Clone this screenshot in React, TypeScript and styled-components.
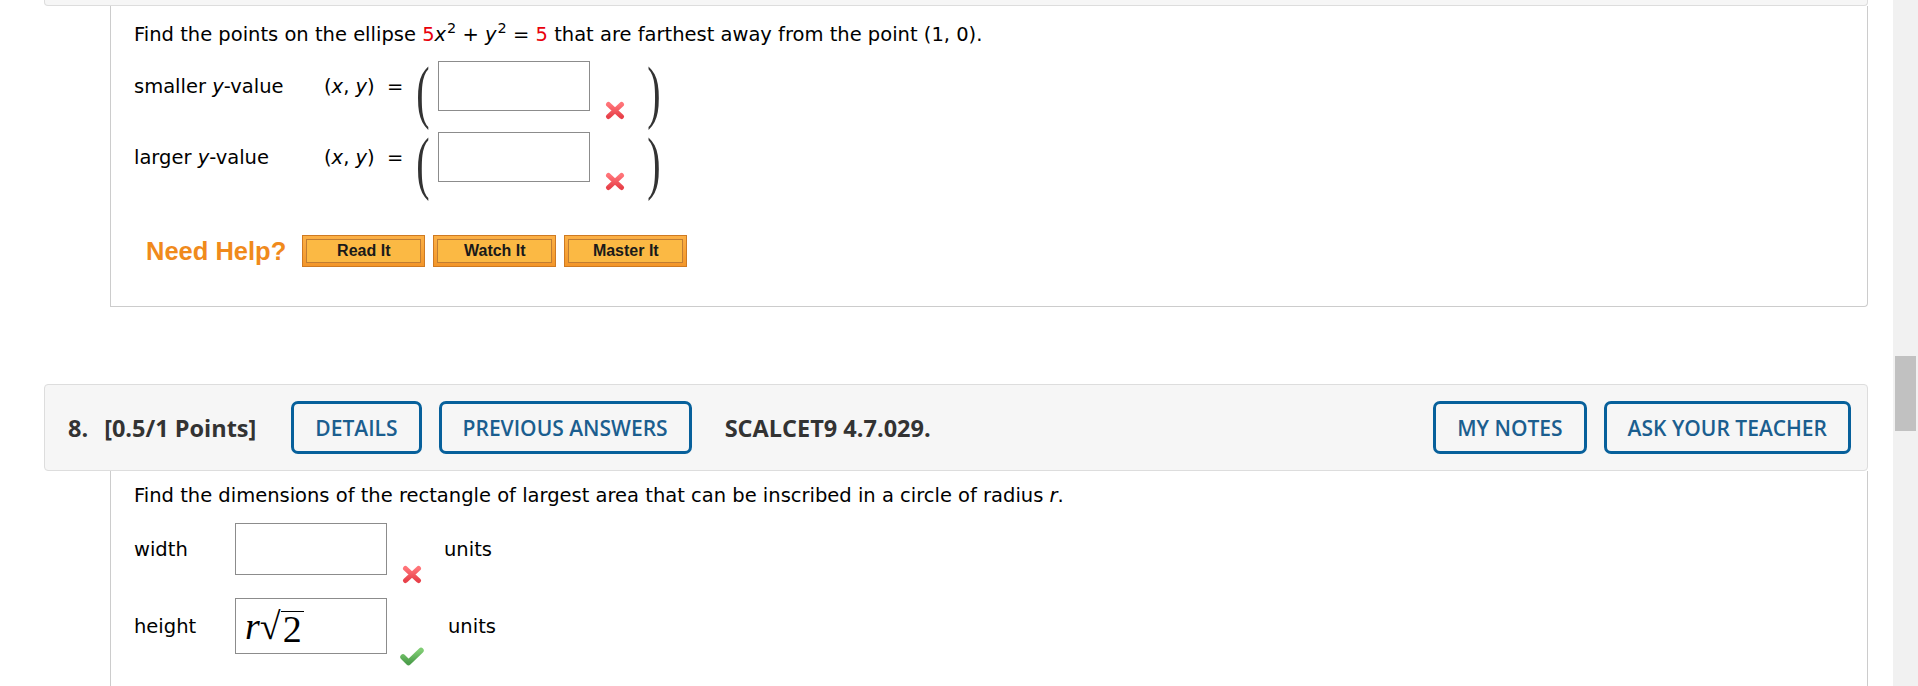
import React from 'react';
import styled, { createGlobalStyle } from 'styled-components';

const GlobalStyle = createGlobalStyle`
  html, body {
    margin: 0;
    padding: 0;
    background: #fff;
    overflow: hidden;
  }
  body {
    font-family: "DejaVu Sans", Verdana, sans-serif;
    font-size: 19.5px;
    color: #000;
  }
`;

const Page = styled.div`
  display: flex;
  width: 1918px;
  height: 686px;
  overflow: hidden;
`;

const Main = styled.main`
  flex: 1;
  min-width: 0;
  padding: 0 25px 0 44px;
`;

const Scrollbar = styled.div`
  width: 25px;
  background: #f1f1f1;
  display: flex;
  flex-direction: column;
  align-items: center;
`;

const Thumb = styled.div`
  margin-top: 356px;
  width: 21px;
  height: 75px;
  background: #c1c1c1;
`;

const HeaderTail = styled.div`
  height: 5px;
  background: #f6f6f6;
  border: 1px solid #ddd;
  border-top: none;
  border-radius: 0 0 4px 4px;
`;

const QuestionBody = styled.div<{ $open?: boolean }>`
  margin-left: 66px;
  border: 1px solid #ccc;
  border-top: none;
  border-bottom: ${(p) => (p.$open ? 'none' : '1px solid #ccc')};
  border-radius: ${(p) => (p.$open ? '0' : '0 0 4px 0')};
  padding: ${(p) => (p.$open ? '13px 0 60px 23px' : '17px 0 39px 23px')};
`;

const Prompt = styled.p<{ $gap: number }>`
  margin: 0 0 ${(p) => p.$gap}px;
  line-height: 24px;
`;

const Red = styled.span`
  color: #e8000b;
`;

const Sup = styled.sup`
  font-size: 0.74em;
  line-height: 0;
  vertical-align: 0.55em;
  margin-left: 1px;
`;

const AnswerRow = styled.div`
  display: flex;
  align-items: center;
  height: 50px;

  & + & {
    margin-top: 21px;
  }
`;

const RowLabel = styled.span<{ $w: number }>`
  width: ${(p) => p.$w}px;
  flex: none;
`;

const Expr = styled.span`
  width: 92px;
  flex: none;
  white-space: pre;
`;

const Paren = styled.span<{ $before: number; $after: number }>`
  align-self: flex-start;
  margin-top: -2px;
  margin-left: ${(p) => p.$before}px;
  margin-right: ${(p) => p.$after}px;
  height: 62px;
  width: 14px;
  display: flex;
  align-items: center;
  justify-content: center;
  font-family: "Liberation Serif", serif;
  font-size: 40px;
  color: #333;
  transform: scale(1, 1.75);
`;

const AnswerBox = styled.div<{ $h: number }>`
  width: 152px;
  height: ${(p) => p.$h}px;
  box-sizing: border-box;
  border: 1px solid #8c8c8c;
  background: #fff;
  flex: none;
  display: flex;
  align-items: center;
  padding-left: 9px;
`;

const Mark = styled.span<{ $top: number; $left: number }>`
  align-self: flex-start;
  margin-top: ${(p) => p.$top}px;
  margin-left: ${(p) => p.$left}px;
  display: flex;
  flex: none;
`;

const NeedHelpRow = styled.div`
  display: flex;
  align-items: center;
  gap: 8px;
  margin-top: 53px;
  padding-left: 12px;
`;

const NeedHelp = styled.span`
  font-family: "Liberation Sans", Arial, sans-serif;
  font-weight: bold;
  font-size: 25.5px;
  color: #f08a1c;
  margin-right: 8px;
`;

const HelpButton = styled.button`
  width: 123px;
  height: 32px;
  padding: 3px;
  box-sizing: border-box;
  border: 1px solid #cf7a22;
  background: linear-gradient(#fbb046, #f3962a);
  cursor: pointer;
  display: flex;
`;

const HelpFace = styled.span`
  flex: 1;
  display: flex;
  align-items: center;
  justify-content: center;
  border: 1px solid #c07d33;
  background: #fbb944;
  font-family: "Liberation Sans", Arial, sans-serif;
  font-weight: bold;
  font-size: 16px;
  color: #1a1a1a;
`;

const Gap = styled.div`
  height: 77px;
`;

const Header = styled.div`
  display: flex;
  align-items: center;
  height: 87px;
  box-sizing: border-box;
  border: 1px solid #ddd;
  border-radius: 4px;
  background: #f6f6f6;
  padding: 0 16px 0 23px;
  font-family: "Open Sans", sans-serif;
  color: #333;
`;

const HeaderText = styled.span<{ $left?: number }>`
  font-size: 23.5px;
  font-weight: 700;
  margin-left: ${(p) => p.$left ?? 0}px;
  white-space: pre;
`;

const HeaderButton = styled.button<{ $left: number }>`
  height: 53px;
  margin-left: ${(p) => p.$left}px;
  padding: 0 21px;
  border: 3px solid #07609b;
  border-radius: 7px;
  background: transparent;
  font-family: "Open Sans", sans-serif;
  font-size: 21px;
  font-weight: 600;
  color: #1b5e8f;
  cursor: pointer;
`;

const Spacer = styled.div`
  flex: 1;
`;

const FieldRow = styled.div<{ $top: number; $h: number }>`
  display: flex;
  align-items: center;
  height: ${(p) => p.$h}px;
  margin-top: ${(p) => p.$top}px;
`;

const Units = styled.span<{ $left: number }>`
  margin-left: ${(p) => p.$left}px;
`;

const MathFont = styled.span`
  font-family: "Liberation Serif", "DejaVu Serif", serif;
  font-size: 38px;
  line-height: 1;
  display: flex;
  align-items: flex-end;
`;

const Radicand = styled.span`
  border-top: 1.5px solid #000;
  padding: 1px 2px 0 2px;
  line-height: 0.85;
`;

const CrossIcon = () => (
  <svg width="20" height="19" viewBox="0 0 20 19">
    <defs>
      <linearGradient id="xg" x1="0" y1="0" x2="0" y2="1">
        <stop offset="0" stopColor="#ff7378" />
        <stop offset="1" stopColor="#e8414a" />
      </linearGradient>
    </defs>
    <path d="M3.5 3.5 L16.5 15.5 M16.5 3.5 L3.5 15.5" stroke="url(#xg)" strokeWidth="5" strokeLinecap="round" fill="none" />
  </svg>
);

const CheckIcon = () => (
  <svg width="24" height="19" viewBox="0 0 24 19">
    <defs>
      <linearGradient id="cg" x1="0" y1="0" x2="0" y2="1">
        <stop offset="0" stopColor="#7fcc73" />
        <stop offset="1" stopColor="#4e9f4c" />
      </linearGradient>
    </defs>
    <path d="M3 10 L8.5 15.5 L21 3.5" stroke="url(#cg)" strokeWidth="5.5" strokeLinecap="round" strokeLinejoin="round" fill="none" />
  </svg>
);

const PointRow = ({ which }: { which: string }) => (
  <AnswerRow>
    <RowLabel $w={190}>
      {which} <i>y</i>-value
    </RowLabel>
    <Expr>
      (<i>x</i>, <i>y</i>)  =
    </Expr>
    <Paren $before={0} $after={8}>(</Paren>
    <AnswerBox $h={50} />
    <Mark $top={40} $left={15}>
      <CrossIcon />
    </Mark>
    <Paren $before={22} $after={0}>)</Paren>
  </AnswerRow>
);

export default function App() {
  return (
    <Page>
      <GlobalStyle />
      <Main>
        <HeaderTail />
        <QuestionBody>
          <Prompt $gap={14}>
            Find the points on the ellipse <Red>5</Red>
            <i>x</i>
            <Sup>2</Sup> + <i>y</i>
            <Sup>2</Sup> = <Red>5</Red> that are farthest away from the point (1, 0).
          </Prompt>
          <PointRow which="smaller" />
          <PointRow which="larger" />
          <NeedHelpRow>
            <NeedHelp>Need Help?</NeedHelp>
            <HelpButton>
              <HelpFace>Read It</HelpFace>
            </HelpButton>
            <HelpButton>
              <HelpFace>Watch It</HelpFace>
            </HelpButton>
            <HelpButton>
              <HelpFace>Master It</HelpFace>
            </HelpButton>
          </NeedHelpRow>
        </QuestionBody>

        <Gap />

        <Header>
          <HeaderText>8.</HeaderText>
          <HeaderText $left={16}>[0.5/1 Points]</HeaderText>
          <HeaderButton $left={35}>DETAILS</HeaderButton>
          <HeaderButton $left={17}>PREVIOUS ANSWERS</HeaderButton>
          <HeaderText $left={33}>SCALCET9 4.7.029.</HeaderText>
          <Spacer />
          <HeaderButton $left={0}>MY NOTES</HeaderButton>
          <HeaderButton $left={17}>ASK YOUR TEACHER</HeaderButton>
        </Header>

        <QuestionBody $open>
          <Prompt $gap={15}>
            Find the dimensions of the rectangle of largest area that can be inscribed in a circle of radius <i>r</i>.
          </Prompt>
          <FieldRow $top={0} $h={52}>
            <RowLabel $w={101}>width</RowLabel>
            <AnswerBox $h={52} />
            <Mark $top={42} $left={15}>
              <CrossIcon />
            </Mark>
            <Units $left={22}>units</Units>
          </FieldRow>
          <FieldRow $top={23} $h={56}>
            <RowLabel $w={101}>height</RowLabel>
            <AnswerBox $h={56}>
              <MathFont>
                <i>r</i>
                <span>√</span>
                <Radicand>2</Radicand>
              </MathFont>
            </AnswerBox>
            <Mark $top={49} $left={13}>
              <CheckIcon />
            </Mark>
            <Units $left={24}>units</Units>
          </FieldRow>
        </QuestionBody>
      </Main>
      <Scrollbar>
        <Thumb />
      </Scrollbar>
    </Page>
  );
}
